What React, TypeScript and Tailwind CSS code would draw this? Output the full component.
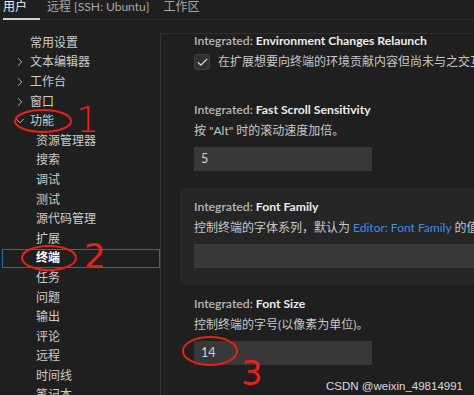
import React from 'react';
import { ChevronRight, ChevronDown, Check } from 'lucide-react';

const font = { fontFamily: 'Lato, "Noto Sans CJK SC", sans-serif' };

type NavItem = { label: string; level: 0 | 1; chevron?: 'right' | 'down'; selected?: boolean };

const nav: NavItem[] = [
  { label: '常用设置', level: 0 },
  { label: '文本编辑器', level: 0, chevron: 'right' },
  { label: '工作台', level: 0, chevron: 'right' },
  { label: '窗口', level: 0, chevron: 'right' },
  { label: '功能', level: 0, chevron: 'down' },
  { label: '资源管理器', level: 1 },
  { label: '搜索', level: 1 },
  { label: '调试', level: 1 },
  { label: '测试', level: 1 },
  { label: '源代码管理', level: 1 },
  { label: '扩展', level: 1 },
  { label: '终端', level: 1, selected: true },
  { label: '任务', level: 1 },
  { label: '问题', level: 1 },
  { label: '输出', level: 1 },
  { label: '评论', level: 1 },
  { label: '远程', level: 1 },
  { label: '时间线', level: 1 },
  { label: '笔记本', level: 1 },
];

const Title: React.FC<{ name: string }> = ({ name }) => (
  <div className="h-[14px] leading-[14px] text-[12.2px] font-semibold whitespace-nowrap">
    <span className="text-[#b8b8b8]">Integrated: </span>
    <span className="text-[#ececec] font-bold">{name}</span>
  </div>
);

const Desc: React.FC<{ children: React.ReactNode }> = ({ children }) => (
  <div className="mt-[5px] h-[18px] leading-[18px] text-[12px] text-[#c8c8c8] whitespace-nowrap">{children}</div>
);

const Input: React.FC<{ value?: string; wide?: boolean }> = ({ value, wide }) => (
  <div
    className={`mt-[7px] h-[24px] bg-[#383838] pl-[7px] flex items-center text-[12.5px] text-[#d4d4d4] ${
      wide ? 'w-[300px]' : 'w-[178px]'
    }`}
  >
    {value}
  </div>
);

export default function App() {
  return (
    <div className="relative w-[474px] h-[395px] overflow-hidden bg-[#1f1f1f] text-[#cccccc]" style={font}>
      {/* tabs */}
      <div className="flex h-[20px] border-b border-[#2e2e2e] text-[12px] leading-[14px]">
        <div className="ml-[3px] w-[37px] border-b-2 border-[#d0d0d0] text-[#f0f0f0] -mb-px">用户</div>
        <div className="ml-[7px] text-[#a8a8a8]">远程 [SSH: Ubuntu]</div>
        <div className="ml-[14px] text-[#a8a8a8]">工作区</div>
      </div>

      <div className="flex mt-[13px] h-[362px]">
        {/* sidebar */}
        <div className="w-[161px] shrink-0 border-r border-[#333333]">
          {nav.map((item) => (
            <div
              key={item.label}
              className={`h-[19.6px] flex items-center text-[12px] whitespace-nowrap ${
                item.selected ? 'border border-[#1f6fae] ml-[2px] font-bold text-[#ffffff]' : ''
              }`}
            >
              {item.level === 0 ? (
                <>
                  <span className="w-[30px] flex justify-end pr-[3px]">
                    {item.chevron === 'right' && <ChevronRight size={14} strokeWidth={1.5} className="text-[#c5c5c5]" />}
                    {item.chevron === 'down' && <ChevronDown size={14} strokeWidth={1.5} className="text-[#c5c5c5]" />}
                  </span>
                  <span>{item.label}</span>
                </>
              ) : (
                <span className={item.selected ? 'ml-[33px]' : 'ml-[36px]'}>{item.label}</span>
              )}
            </div>
          ))}
        </div>

        {/* settings */}
        <div className="flex-1 border-t border-[#2e2e2e] overflow-hidden">
          <div className="ml-[19px] px-[14px] h-[57px]">
            <Title name="Environment Changes Relaunch" />
            <div className="mt-[5px] flex items-center">
              <div className="w-[16px] h-[16px] shrink-0 rounded-[3px] bg-[#313131] border border-[#3e3e3e] flex items-center justify-center">
                <Check size={13} strokeWidth={2} className="text-[#e0e0e0]" />
              </div>
              <span className="ml-[8px] text-[12px] text-[#c8c8c8] whitespace-nowrap">
                在扩展想要向终端的环境贡献内容但尚未与之交互时，是否自动重新启动终端。
              </span>
            </div>
          </div>

          <div className="ml-[19px] px-[14px] pt-[12px] h-[97px]">
            <Title name="Fast Scroll Sensitivity" />
            <Desc>按 "Alt" 时的滚动速度加倍。</Desc>
            <Input value="5" />
          </div>

          <div className="ml-[19px] px-[14px] pt-[12px] h-[97px] bg-[#252525]">
            <Title name="Font Family" />
            <Desc>
              控制终端的字体系列，默认为 <span className="text-[#3b8eea]">Editor: Font Family</span> 的值。
            </Desc>
            <Input wide />
          </div>

          <div className="ml-[19px] px-[14px] pt-[12px] h-[97px]">
            <Title name="Font Size" />
            <Desc>控制终端的字号(以像素为单位)。</Desc>
            <Input value="14" />
          </div>
        </div>
      </div>

      {/* annotations */}
      <svg className="absolute inset-0 pointer-events-none" width="474" height="395">
        <ellipse cx="43" cy="121" rx="28" ry="11" fill="none" stroke="#e8201a" strokeWidth="2" />
        <ellipse cx="49" cy="258" rx="27" ry="12" fill="none" stroke="#e8201a" strokeWidth="2" />
        <ellipse cx="210" cy="351" rx="27" ry="14" fill="none" stroke="#e8201a" strokeWidth="2" />
      </svg>
      <span className="absolute left-[76px] top-[104px] text-[36px] leading-[32px] text-[#e8201a]" style={{ fontFamily: '"DejaVu Sans", sans-serif', fontWeight: 300 }}>1</span>
      <span className="absolute left-[84px] top-[240px] text-[34px] leading-[32px] text-[#e8201a]" style={{ fontFamily: '"DejaVu Sans", sans-serif' }}>2</span>
      <span className="absolute left-[241px] top-[357px] text-[34px] leading-[32px] text-[#e8201a]" style={{ fontFamily: '"DejaVu Sans", sans-serif' }}>3</span>

      <span className="absolute left-[326px] top-[379px] text-[11.5px] leading-[15px] text-[#dcdcdc] whitespace-nowrap" style={{ fontFamily: '"Liberation Sans", sans-serif' }}>
        CSDN @weixin_49814991
      </span>
    </div>
  );
}
